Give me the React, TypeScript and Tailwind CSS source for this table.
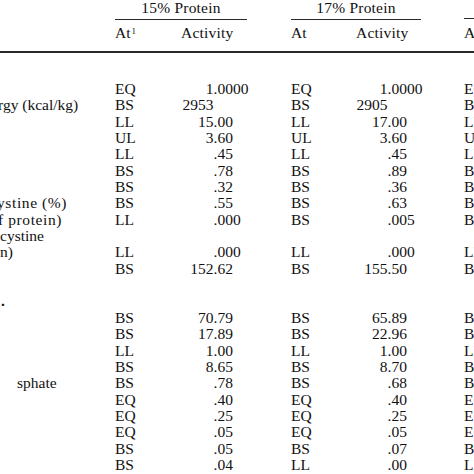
type Cell = [string, string] | null;

interface Row {
  label?: string;
  labelClass?: string;
  a: Cell;
  b: Cell;
  c?: string;
}

const rows: Row[] = [
  { a: ['EQ', '1.0000'], b: ['EQ', '1.0000'], c: 'EQ' },
  { label: 'rgy (kcal/kg)', labelClass: '-ml-[2px]', a: ['BS', '2953'], b: ['BS', '2905'], c: 'BS' },
  { a: ['LL', '15.00'], b: ['LL', '17.00'], c: 'LL' },
  { a: ['UL', '3.60'], b: ['UL', '3.60'], c: 'UL' },
  { a: ['LL', '.45'], b: ['LL', '.45'], c: 'LL' },
  { a: ['BS', '.78'], b: ['BS', '.89'], c: 'BS' },
  { a: ['BS', '.32'], b: ['BS', '.36'], c: 'BS' },
  { label: 'ystine (%)', labelClass: '-ml-[3px] tracking-[0.6px]', a: ['BS', '.55'], b: ['BS', '.63'], c: 'BS' },
  { label: 'f protein)', labelClass: '-ml-[2px] tracking-[0.6px]', a: ['LL', '.000'], b: ['BS', '.005'], c: 'BS' },
  { label: 'cystine', a: null, b: null },
  { label: 'n)', a: ['LL', '.000'], b: ['LL', '.000'], c: 'LL' },
  { a: ['BS', '152.62'], b: ['BS', '155.50'], c: 'BS' },
  { a: null, b: null },
  { label: '.', labelClass: 'ml-[1px] font-bold', a: null, b: null },
  { a: ['BS', '70.79'], b: ['BS', '65.89'], c: 'BS' },
  { a: ['BS', '17.89'], b: ['BS', '22.96'], c: 'BS' },
  { a: ['LL', '1.00'], b: ['LL', '1.00'], c: 'LL' },
  { a: ['BS', '8.65'], b: ['BS', '8.70'], c: 'BS' },
  { label: 'sphate', labelClass: 'ml-[17px]', a: ['BS', '.78'], b: ['BS', '.68'], c: 'BS' },
  { a: ['EQ', '.40'], b: ['EQ', '.40'], c: 'EQ' },
  { a: ['EQ', '.25'], b: ['EQ', '.25'], c: 'EQ' },
  { a: ['EQ', '.05'], b: ['EQ', '.05'], c: 'EQ' },
  { a: ['BS', '.05'], b: ['BS', '.07'], c: 'BS' },
  { a: ['BS', '.04'], b: ['LL', '.00'], c: 'LL' },
];

// split on the decimal point so the activity column lines up on it
function splitValue(v: string): [string, string] {
  const i = v.indexOf('.');
  if (i < 0) return [v, ''];
  return [v.slice(0, i), v.slice(i)];
}

const gridCols = 'grid grid-cols-[115px_60px_38.5px_77.5px_60px_36.5px_76.5px_60px]';

function Group({ cell }: { cell: Cell }) {
  if (!cell) {
    return (
      <>
        <span />
        <span />
        <span />
      </>
    );
  }
  const [intPart, fracPart] = splitValue(cell[1]);
  return (
    <>
      <span>{cell[0]}</span>
      <span className="text-right">{intPart}</span>
      <span>{fracPart}</span>
    </>
  );
}

export default function App() {
  return (
    <div className="w-[474px] h-[474px] overflow-hidden bg-white text-[#111] font-['Liberation_Serif','Times_New_Roman',serif] text-[15.5px]">
      <div className="w-[560px]">
        {/* group headers */}
        <div className="flex leading-[16px]">
          <div className="w-[115px] shrink-0" />
          <div className="w-[132px] shrink-0 text-center pb-[3px] border-b border-[#2a2a2a] tracking-[0.2px]">
            15% Protein
          </div>
          <div className="w-[44px] shrink-0" />
          <div className="w-[130px] shrink-0 text-center pb-[3px] border-b border-[#2a2a2a] tracking-[0.2px]">
            17% Protein
          </div>
          <div className="w-[43px] shrink-0" />
          <div className="w-[130px] shrink-0 h-[19px] border-b border-[#2a2a2a]" />
        </div>

        {/* sub headers */}
        <div className={`${gridCols} mt-[5px] pb-[10px] border-b-2 border-[#2a2a2a] leading-[16px] whitespace-nowrap`}>
          <span />
          <span>
            At<sup className="text-[9px] ml-[1px]">1</sup>
          </span>
          <span className="col-span-2 pl-[6px] tracking-[0.2px]">Activity</span>
          <span>At</span>
          <span className="col-span-2 pl-[5px] tracking-[0.2px]">Activity</span>
          <span>At</span>
        </div>

        {/* body */}
        <div className="pt-[28px]">
          {rows.map((r, i) => (
            <div key={i} className={`${gridCols} h-[16.35px] leading-[16.35px] whitespace-nowrap`}>
              <span>
                <span className={`inline-block ${r.labelClass ?? ''}`}>{r.label ?? ''}</span>
              </span>
              <Group cell={r.a} />
              <Group cell={r.b} />
              <span>{r.c ?? ''}</span>
            </div>
          ))}
        </div>
      </div>
    </div>
  );
}
